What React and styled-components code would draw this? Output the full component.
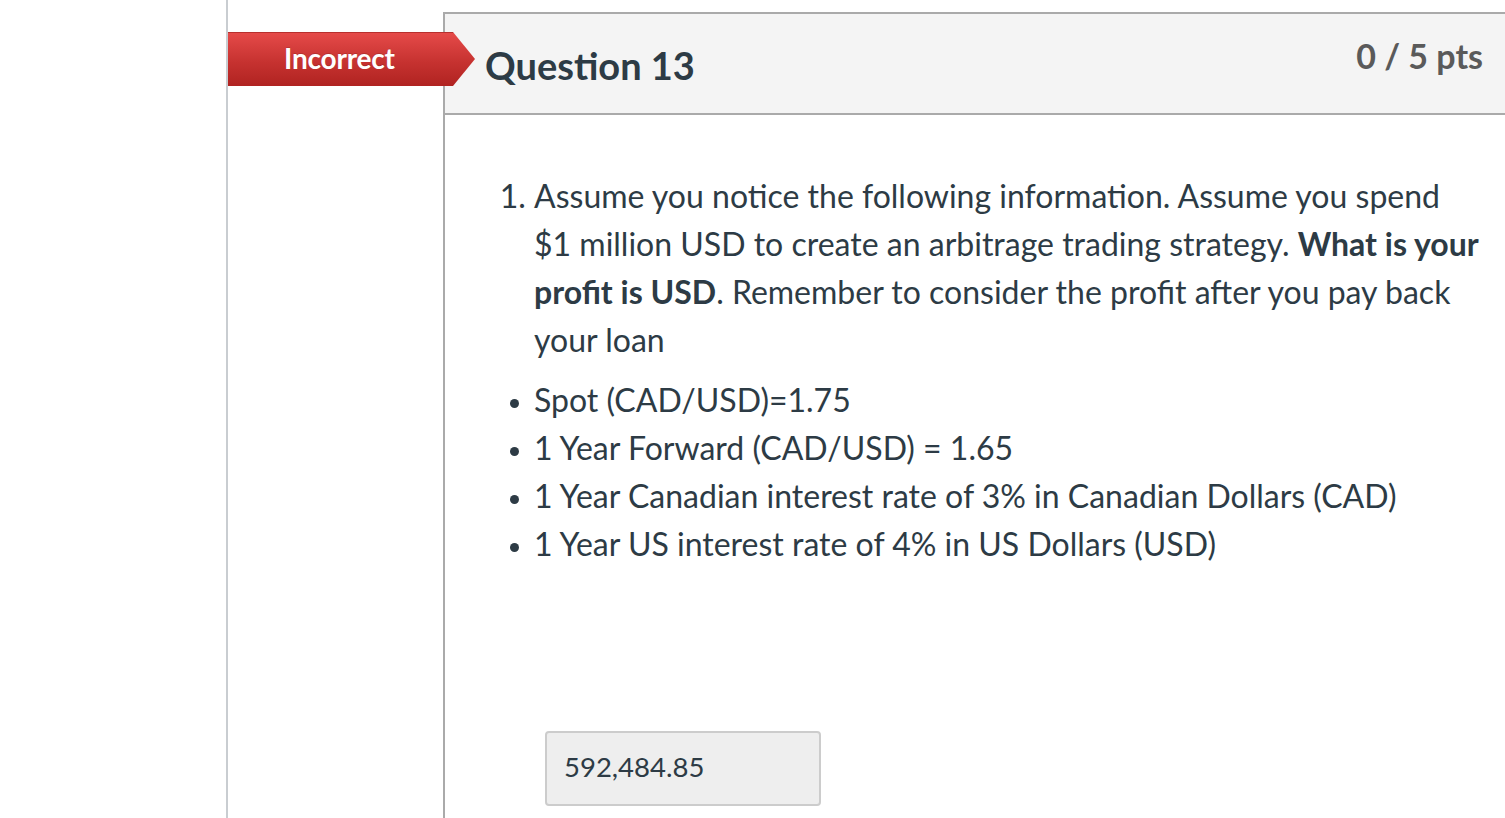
import React from "react";
import styled, { createGlobalStyle } from "styled-components";

const Global = createGlobalStyle`
  html, body { margin: 0; padding: 0; background: #fff; }
  body { font-family: Lato, "Open Sans", "Liberation Sans", sans-serif; color: #2d3b45; }
`;

const Page = styled.div`
  display: flex;
  height: 818px;
  overflow: hidden;
`;

const Gutter = styled.div`
  width: 226px;
  flex: none;
  border-right: 2px solid #c9cdd1;
`;

const BannerCol = styled.div`
  width: 215px;
  flex: none;
  padding-top: 32px;
  position: relative;
  z-index: 2;
`;

const Banner = styled.div`
  width: 247px;
  height: 54px;
  box-sizing: border-box;
  display: flex;
  align-items: center;
  padding: 0 0 4px 56px;
  color: #fff;
  font-weight: 700;
  font-size: 28px;
  letter-spacing: -0.2px;
  background: linear-gradient(#e54a49, #c63230 55%, #b02321);
  border-top: 1px solid #b8302e;
  clip-path: polygon(0 0, calc(100% - 22px) 0, 100% 50%, calc(100% - 22px) 100%, 0 100%);
  text-shadow: 0 -1px 0 rgba(0,0,0,0.15);
`;

const Card = styled.div`
  flex: 1;
  margin-top: 12px;
  border-top: 2px solid #aaaaaa;
  border-left: 2px solid #aaaaaa;
  min-width: 0;
`;

const Header = styled.div`
  height: 101px;
  box-sizing: border-box;
  background: #f4f4f4;
  border-bottom: 2px solid #aaaaaa;
  display: flex;
  justify-content: space-between;
  align-items: flex-start;
  padding: 0 22px 0 40px;
`;

const Title = styled.div`
  font-weight: 700;
  font-size: 38px;
  margin-top: 28px;
  color: #2d3b45;
`;

const Points = styled.div`
  font-weight: 700;
  font-size: 34px;
  margin-top: 21px;
  color: #5a5a5a;
`;

const Body = styled.div`
  padding: 57px 23px 0 54px;
  font-size: 32px;
  line-height: 48px;
`;

const OL = styled.ol`
  margin: 0;
  padding-left: 35px;
`;

const UL = styled.ul`
  margin: 12px 0 0;
  padding-left: 35px;
  li::marker { font-size: 26px; }
`;

const Answer = styled.div`
  margin: 163px 0 0 46px;
  width: 276px;
  height: 75px;
  box-sizing: border-box;
  background: #eeeeee;
  border: 2px solid #cccccc;
  border-radius: 4px;
  display: flex;
  align-items: center;
  padding: 0 0 3px 17px;
  font-size: 27.5px;
  color: #2d3b45;
`;

export default function App() {
  return (
    <>
      <Global />
      <Page>
        <Gutter />
        <BannerCol>
          <Banner>Incorrect</Banner>
        </BannerCol>
        <Card>
          <Header>
            <Title>Question 13</Title>
            <Points>0 / 5 pts</Points>
          </Header>
          <Body>
            <OL>
              <li>
                Assume you notice the following information. Assume you spend $1 million USD to create an arbitrage trading strategy. <b>What is your profit is USD</b>. Remember to consider the profit after you pay back your loan
              </li>
            </OL>
            <UL>
              <li>Spot (CAD/USD)=1.75</li>
              <li>1 Year Forward (CAD/USD) = 1.65</li>
              <li>1 Year Canadian interest rate of 3% in Canadian Dollars (CAD)</li>
              <li>1 Year US interest rate of 4% in US Dollars (USD)</li>
            </UL>
            <Answer>592,484.85</Answer>
          </Body>
        </Card>
      </Page>
    </>
  );
}
